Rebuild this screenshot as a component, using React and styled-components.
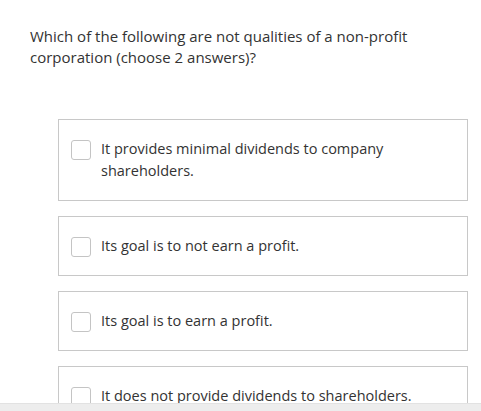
import React from "react";
import styled, { createGlobalStyle } from "styled-components";

const Global = createGlobalStyle`
  html, body { margin: 0; padding: 0; background: #fff; }
  body { font-family: "Open Sans", "Liberation Sans", sans-serif; color: #333; }
`;

const Page = styled.div`
  padding: 26px 13px 40px 30px;
`;

const Question = styled.p`
  margin: 0 0 51px 0;
  font-size: 15px;
  line-height: 21px;
  color: #333;
  max-width: 400px;
`;

const Options = styled.div`
  display: flex;
  flex-direction: column;
  gap: 15px;
  margin-left: 28px;
`;

const Option = styled.label`
  display: flex;
  align-items: flex-start;
  gap: 10px;
  padding: 18px 12px;
  border: 1px solid #c8c8c8;
  background: #fff;
  cursor: pointer;
`;

const Box = styled.span`
  flex: none;
  width: 18px;
  height: 18px;
  margin-top: 2px;
  border: 1px solid #c4c4c4;
  border-radius: 3px;
  background: #fff;
`;

const Label = styled.span`
  flex: 1;
  font-size: 14.5px;
  line-height: 22px;
  color: #333;
`;

const BottomBar = styled.div`
  position: fixed;
  left: 0;
  right: 0;
  bottom: 0;
  height: 7px;
  background: #ededed;
  border-top: 1px solid #e2e2e2;
`;

const options = [
  "It provides minimal dividends to company shareholders.",
  "Its goal is to not earn a profit.",
  "Its goal is to earn a profit.",
  "It does not provide dividends to shareholders.",
];

export default function App() {
  return (
    <>
      <Global />
      <Page>
        <Question>
          Which of the following are not qualities of a non-profit corporation (choose 2 answers)?
        </Question>
        <Options>
          {options.map((o) => (
            <Option key={o}>
              <Box />
              <Label>{o}</Label>
            </Option>
          ))}
        </Options>
      </Page>
      <BottomBar />
    </>
  );
}
